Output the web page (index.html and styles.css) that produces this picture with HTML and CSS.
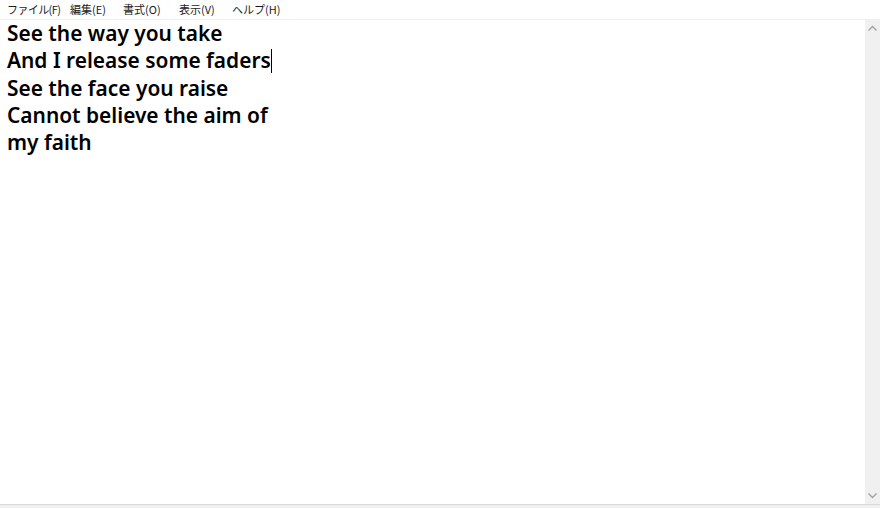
FILE: index.html
```html
<!DOCTYPE html>
<html>
<head>
    <meta charset="utf-8">
    <title>メモ帳</title>
    <link rel="stylesheet" href="styles.css">
</head>
<body>
    <div id="window">
        <div class="menubar">
            <span class="menu-item menu-file">ファイル(F)</span>
            <span class="menu-item menu-edit">編集(E)</span>
            <span class="menu-item menu-format">書式(O)</span>
            <span class="menu-item menu-view">表示(V)</span>
            <span class="menu-item menu-help">ヘルプ(H)</span>
        </div>
        <div class="editor">
            <div class="text-area">
                <div class="line">See the way you take</div>
                <div class="line">And I release some faders<span class="caret"></span></div>
                <div class="line">See the face you raise</div>
                <div class="line">Cannot believe the aim of</div>
                <div class="line">my faith</div>
            </div>
            <div class="scrollbar">
                <svg class="arrow" width="15" height="17" viewBox="0 0 15 17">
                    <path d="M3.5 10.5 L7.5 6.5 L11.5 10.5" fill="none" stroke="#a3a3a3" stroke-width="1.4"/>
                </svg>
                <svg class="arrow" width="15" height="17" viewBox="0 0 15 17">
                    <path d="M3.5 6.5 L7.5 10.5 L11.5 6.5" fill="none" stroke="#a3a3a3" stroke-width="1.4"/>
                </svg>
            </div>
        </div>
        <div class="statusbar"></div>
    </div>
</body>
</html>
```

FILE: styles.css
```css
body {
    margin: 0;
    background-color: #fff;
    font-family: "Noto Sans CJK JP", "Noto Sans", sans-serif;
}

#window {
    width: 880px;
    height: 508px;
    display: flex;
    flex-direction: column;
    overflow: hidden;
}

.menubar {
    height: 19px;
    display: flex;
    align-items: center;
    padding-left: 7px;
    border-bottom: 1px solid #f0f0f0;
    font-size: 11px;
    color: #1a1a1a;
}

.menu-item {
    margin-right: 14px;
    line-height: 19px;
    white-space: nowrap;
}

.menu-file {
    width: 49px;
    letter-spacing: -0.6px;
}

.menu-edit {
    width: 39px;
}

.menu-format {
    width: 42px;
}

.menu-view {
    width: 39px;
}

.editor {
    flex: 1;
    display: flex;
    min-height: 0;
}

.text-area {
    flex: 1;
    padding: 0 0 0 7px;
    font-family: "Noto Sans", sans-serif;
    font-weight: 600;
    font-size: 20.9px;
    line-height: 27.3px;
    color: #000;
}

.line {
    white-space: pre;
}

.caret {
    display: inline-block;
    width: 1px;
    height: 24px;
    background-color: #000;
    vertical-align: -5px;
}

.scrollbar {
    width: 15px;
    background-color: #f0f0f0;
    display: flex;
    flex-direction: column;
    justify-content: space-between;
}

.arrow {
    display: block;
}

.statusbar {
    height: 3px;
    border-top: 1px solid #d9d9d9;
    background-color: #f0f0f0;
}
```
